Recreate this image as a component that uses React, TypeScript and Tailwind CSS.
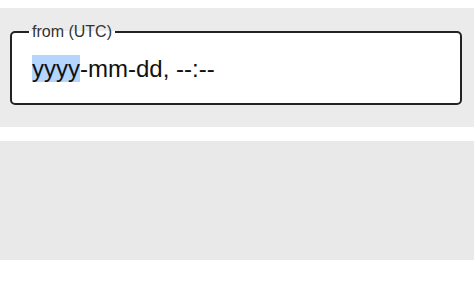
import React from 'react';

export default function App() {
  return (
    <div className="w-[474px] h-[288px] bg-white font-['Liberation_Sans',Arial,sans-serif]">
      <div className="h-2" />
      {/* Time range: from */}
      <div className="h-[119px] bg-[#ebebeb] pl-[10px] pr-[12px] pt-[15px]">
        <fieldset className="h-[82px] border-2 border-[#222] rounded-[5px] bg-white px-[17px] pb-0">
          <legend className="px-[3px] text-[16px] leading-[18px] text-[#333]">from (UTC)</legend>
          <div className="pt-[14px] pl-[3px] text-[24px] leading-[28px] text-[#111]">
            <span className="bg-[#b4d5fe]">yyyy</span>-mm-dd, --:--
          </div>
        </fieldset>
      </div>
      <div className="h-[14px]" />
      {/* Second panel */}
      <div className="h-[119px] bg-[#e9e9e9]" />
    </div>
  );
}
